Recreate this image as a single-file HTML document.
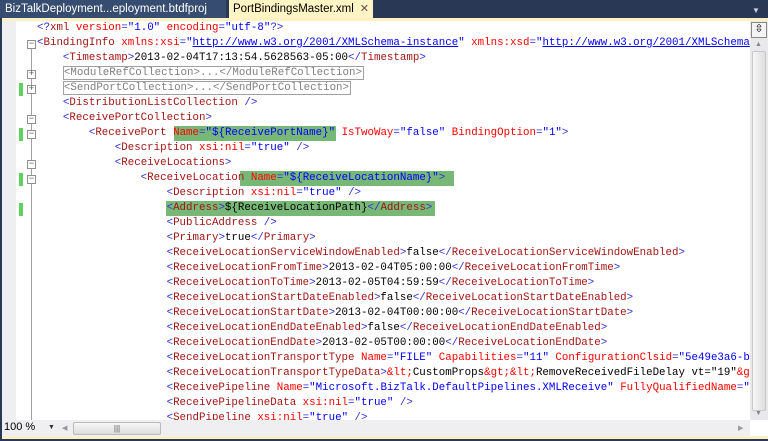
<!DOCTYPE html>
<html><head><meta charset="utf-8"><style>
*{margin:0;padding:0;box-sizing:border-box}
body{width:768px;height:441px;background:#293955;position:relative;overflow:hidden;font-family:"Liberation Sans",sans-serif}
.tab1{position:absolute;left:0;top:0;width:226px;height:18px;background:#364c70;color:#fff;font-size:11.5px;line-height:18px;padding-left:5px}
.tab2{position:absolute;left:229px;top:0;width:144px;height:18px;background:#fff4c4;color:#000;font-size:11.5px;line-height:18px;padding-left:4px}
.tab2 .x{position:absolute;right:4px;top:0;color:#555;font-size:11px}
.ystrip{position:absolute;left:2px;top:18px;width:766px;height:3px;background:#fff1c2}
.editor{position:absolute;left:2px;top:21px;width:748px;height:399px;background:#fff;overflow:hidden}
.gut{position:absolute;left:0;top:0;width:14px;height:399px;background:#efeff2}
.vline{position:absolute;left:29px;top:22px;width:1px;height:377px;background:#a0a0a0}
.bar{position:absolute;left:17px;width:4px;height:13px;background:#5fd35f}
.box{position:absolute;left:25px;width:9px;height:9px;border:1px solid #909090;background:#fff;font-size:9px;line-height:7px;text-align:center;color:#555;font-family:"Liberation Mono",monospace}
pre{position:absolute;left:35px;top:0;font-family:"Liberation Mono",monospace;font-size:10.8px;line-height:15px;white-space:pre;color:#000}
.d{color:#3030d0}.n{color:#a31515}.a{color:#ff0000}.v{color:#0000ff}.u{color:#0000ff;text-decoration:underline}.g{color:#808080}
.col{border:1px solid #a0a0a0;padding:0 1px 0 0}
.hl{position:absolute;height:15px;background:#77b877}
.vs{position:absolute;left:750px;top:21px;width:18px;height:399px;background:#e9e9ec}
.thumb{position:absolute;left:752px;top:51px;width:14px;height:360px;background:linear-gradient(90deg,#f6f6f6,#dedede);border:1px solid #c8c8c8;border-radius:2px}
.bot{position:absolute;left:2px;top:420px;width:766px;height:16px;background:#efeff2}
.zoom{position:absolute;left:4px;top:421px;font-size:11px;color:#000}
.hth{position:absolute;left:73px;top:422px;width:88px;height:13px;background:linear-gradient(#f6f6f6,#dcdcdc);border:1px solid #bbb;border-radius:2px;font-size:8px;text-align:center;line-height:11px;color:#555}
.bys{position:absolute;left:2px;top:436px;width:766px;height:3px;background:#fff1c2}
</style></head><body>
<div class="tab1">BizTalkDeployment...eployment.btdfproj</div>
<div class="tab2">PortBindingsMaster.xml<span class="x">✕</span></div>
<div style="position:absolute;left:752px;top:6px;color:#ccd;font-size:8px">▼</div>
<div class="ystrip"></div>
<div class="editor">
<div class="gut"></div>
<div class="vline"></div>
<div class="hl" style="left:172px;top:105px;width:162px"></div>
<div class="hl" style="left:238px;top:150px;width:214px"></div>
<div class="hl" style="left:164px;top:180px;width:269px"></div>
<div class="bar" style="top:62px"></div>
<div class="bar" style="top:107px"></div>
<div class="bar" style="top:152px"></div>
<div class="bar" style="top:182px"></div>
<div class="box" style="top:19px">−</div>
<div class="box" style="top:49px">+</div>
<div class="box" style="top:64px">+</div>
<div class="box" style="top:94px">−</div>
<div class="box" style="top:109px">−</div>
<div class="box" style="top:139px">−</div>
<div class="box" style="top:154px">−</div>
<pre><span class="d">&lt;?</span><span class="n">xml</span> <span class="a">version</span><span class="d">=</span><span class="v">"1.0"</span> <span class="a">encoding</span><span class="d">=</span><span class="v">"utf-8"</span><span class="d">?&gt;</span>
<span class="d">&lt;</span><span class="n">BindingInfo</span> <span class="a">xmlns:xsi</span><span class="d">=</span><span class="v">"</span><span class="u">http://www.w3.org/2001/XMLSchema-instance</span><span class="v">"</span> <span class="a">xmlns:xsd</span><span class="d">=</span><span class="v">"</span><span class="u">http://www.w3.org/2001/XMLSchema</span><span class="v">"</span>
    <span class="d">&lt;</span><span class="n">Timestamp</span><span class="d">&gt;</span>2013-02-04T17:13:54.5628563-05:00<span class="d">&lt;/</span><span class="n">Timestamp</span><span class="d">&gt;</span>
    <span class="g col">&lt;ModuleRefCollection&gt;...&lt;/ModuleRefCollection&gt;</span>
    <span class="g col">&lt;SendPortCollection&gt;...&lt;/SendPortCollection&gt;</span>
    <span class="d">&lt;</span><span class="n">DistributionListCollection</span> <span class="d">/&gt;</span>
    <span class="d">&lt;</span><span class="n">ReceivePortCollection</span><span class="d">&gt;</span>
        <span class="d">&lt;</span><span class="n">ReceivePort</span> <span class="a">Name</span><span class="d">=</span><span class="v">"${ReceivePortName}"</span> <span class="a">IsTwoWay</span><span class="d">=</span><span class="v">"false"</span> <span class="a">BindingOption</span><span class="d">=</span><span class="v">"1"</span><span class="d">&gt;</span>
            <span class="d">&lt;</span><span class="n">Description</span> <span class="a">xsi:nil</span><span class="d">=</span><span class="v">"true"</span> <span class="d">/&gt;</span>
            <span class="d">&lt;</span><span class="n">ReceiveLocations</span><span class="d">&gt;</span>
                <span class="d">&lt;</span><span class="n">ReceiveLocation</span> <span class="a">Name</span><span class="d">=</span><span class="v">"${ReceiveLocationName}"</span><span class="d">&gt;</span>
                    <span class="d">&lt;</span><span class="n">Description</span> <span class="a">xsi:nil</span><span class="d">=</span><span class="v">"true"</span> <span class="d">/&gt;</span>
                    <span class="d">&lt;</span><span class="n">Address</span><span class="d">&gt;</span>${ReceiveLocationPath}<span class="d">&lt;/</span><span class="n">Address</span><span class="d">&gt;</span>
                    <span class="d">&lt;</span><span class="n">PublicAddress</span> <span class="d">/&gt;</span>
                    <span class="d">&lt;</span><span class="n">Primary</span><span class="d">&gt;</span>true<span class="d">&lt;/</span><span class="n">Primary</span><span class="d">&gt;</span>
                    <span class="d">&lt;</span><span class="n">ReceiveLocationServiceWindowEnabled</span><span class="d">&gt;</span>false<span class="d">&lt;/</span><span class="n">ReceiveLocationServiceWindowEnabled</span><span class="d">&gt;</span>
                    <span class="d">&lt;</span><span class="n">ReceiveLocationFromTime</span><span class="d">&gt;</span>2013-02-04T05:00:00<span class="d">&lt;/</span><span class="n">ReceiveLocationFromTime</span><span class="d">&gt;</span>
                    <span class="d">&lt;</span><span class="n">ReceiveLocationToTime</span><span class="d">&gt;</span>2013-02-05T04:59:59<span class="d">&lt;/</span><span class="n">ReceiveLocationToTime</span><span class="d">&gt;</span>
                    <span class="d">&lt;</span><span class="n">ReceiveLocationStartDateEnabled</span><span class="d">&gt;</span>false<span class="d">&lt;/</span><span class="n">ReceiveLocationStartDateEnabled</span><span class="d">&gt;</span>
                    <span class="d">&lt;</span><span class="n">ReceiveLocationStartDate</span><span class="d">&gt;</span>2013-02-04T00:00:00<span class="d">&lt;/</span><span class="n">ReceiveLocationStartDate</span><span class="d">&gt;</span>
                    <span class="d">&lt;</span><span class="n">ReceiveLocationEndDateEnabled</span><span class="d">&gt;</span>false<span class="d">&lt;/</span><span class="n">ReceiveLocationEndDateEnabled</span><span class="d">&gt;</span>
                    <span class="d">&lt;</span><span class="n">ReceiveLocationEndDate</span><span class="d">&gt;</span>2013-02-05T00:00:00<span class="d">&lt;/</span><span class="n">ReceiveLocationEndDate</span><span class="d">&gt;</span>
                    <span class="d">&lt;</span><span class="n">ReceiveLocationTransportType</span> <span class="a">Name</span><span class="d">=</span><span class="v">"FILE"</span> <span class="a">Capabilities</span><span class="d">=</span><span class="v">"11"</span> <span class="a">ConfigurationClsid</span><span class="d">=</span><span class="v">"5e49e3a6-b4fc</span>
                    <span class="d">&lt;</span><span class="n">ReceiveLocationTransportTypeData</span><span class="d">&gt;</span><span class="a">&amp;lt;</span>CustomProps<span class="a">&amp;gt;&amp;lt;</span>RemoveReceivedFileDelay vt="19"<span class="a">&amp;gt;</span>
                    <span class="d">&lt;</span><span class="n">ReceivePipeline</span> <span class="a">Name</span><span class="d">=</span><span class="v">"Microsoft.BizTalk.DefaultPipelines.XMLReceive"</span> <span class="a">FullyQualifiedName</span><span class="d">=</span><span class="v">"Mi</span>
                    <span class="d">&lt;</span><span class="n">ReceivePipelineData</span> <span class="a">xsi:nil</span><span class="d">=</span><span class="v">"true"</span> <span class="d">/&gt;</span>
                    <span class="d">&lt;</span><span class="n">SendPipeline</span> <span class="a">xsi:nil</span><span class="d">=</span><span class="v">"true"</span> <span class="d">/&gt;</span></pre>
</div>
<div class="vs"></div>
<div style="position:absolute;left:751px;top:22px;width:16px;height:16px;border:1px solid #888;background:#f4f4f4;font-size:11px;text-align:center;line-height:13px">⇳</div>
<div style="position:absolute;left:755px;top:41px;font-size:7px;color:#888">▲</div>
<div class="thumb"></div>
<div style="position:absolute;left:755px;top:410px;font-size:7px;color:#888">▼</div>
<div class="bot"></div>
<div class="zoom">100 %</div>
<div style="position:absolute;left:48px;top:424px;font-size:7px;color:#333">▼</div>
<div style="position:absolute;left:62px;top:424px;font-size:7px;color:#999">◀</div>
<div class="hth">|||</div>
<div style="position:absolute;left:738px;top:424px;font-size:7px;color:#999">▶</div>
<div style="position:absolute;left:750px;top:420px;width:18px;height:16px;background:#fff"></div>
<div class="bys"></div>
</body></html>
